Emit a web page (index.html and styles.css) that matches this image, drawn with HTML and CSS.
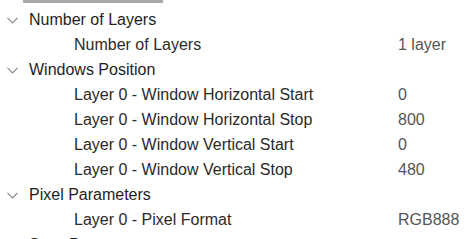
FILE: index.html
```html
<!DOCTYPE html>
<html>
<head>
<meta charset="utf-8">
<link rel="stylesheet" href="styles.css">
</head>
<body>
<div class="topbar"></div>
<div class="tree">
  <div class="row header"><svg class="chev" width="11" height="7" viewBox="0 0 11 7"><path d="M0.5 0.8 L5.5 5.8 L10.5 0.8" fill="none" stroke="#8a8a8a" stroke-width="1.2"/></svg><span class="label">Number of Layers</span></div>
  <div class="row child"><span class="label">Number of Layers</span><span class="value">1 layer</span></div>
  <div class="row header"><svg class="chev" width="11" height="7" viewBox="0 0 11 7"><path d="M0.5 0.8 L5.5 5.8 L10.5 0.8" fill="none" stroke="#8a8a8a" stroke-width="1.2"/></svg><span class="label">Windows Position</span></div>
  <div class="row child"><span class="label">Layer 0 - Window Horizontal Start</span><span class="value">0</span></div>
  <div class="row child"><span class="label">Layer 0 - Window Horizontal Stop</span><span class="value">800</span></div>
  <div class="row child"><span class="label">Layer 0 - Window Vertical Start</span><span class="value">0</span></div>
  <div class="row child"><span class="label">Layer 0 - Window Vertical Stop</span><span class="value">480</span></div>
  <div class="row header"><svg class="chev" width="11" height="7" viewBox="0 0 11 7"><path d="M0.5 0.8 L5.5 5.8 L10.5 0.8" fill="none" stroke="#8a8a8a" stroke-width="1.2"/></svg><span class="label">Pixel Parameters</span></div>
  <div class="row child"><span class="label">Layer 0 - Pixel Format</span><span class="value">RGB888</span></div>
  <div class="row header"><svg class="chev" width="11" height="7" viewBox="0 0 11 7"><path d="M0.5 0.8 L5.5 5.8 L10.5 0.8" fill="none" stroke="#8a8a8a" stroke-width="1.2"/></svg><span class="label">Sync Parameters</span></div>
</div>
</body>
</html>
```
FILE: styles.css
```css
html, body {
  margin: 0;
  padding: 0;
  background: #ffffff;
  overflow: hidden;
}
body {
  width: 474px;
  height: 239px;
  font-family: "Liberation Sans", Arial, sans-serif;
  font-size: 16px;
}
.topbar {
  margin-left: 23px;
  width: 140px;
  height: 3px;
  background: #a9a9a9;
}
.tree {
  padding-top: 4px;
}
.row {
  display: flex;
  align-items: center;
  height: 25px;
  line-height: 25px;
  white-space: nowrap;
}
.header {
  padding-left: 7px;
  color: #1e1e1e;
}
.chev {
  display: block;
  margin-right: 11px;
  margin-top: 1px;
}
.child {
  padding-left: 74px;
  color: #2a2a2a;
}
.child .label {
  width: 324px;
}
.value {
  color: #555555;
}
```
